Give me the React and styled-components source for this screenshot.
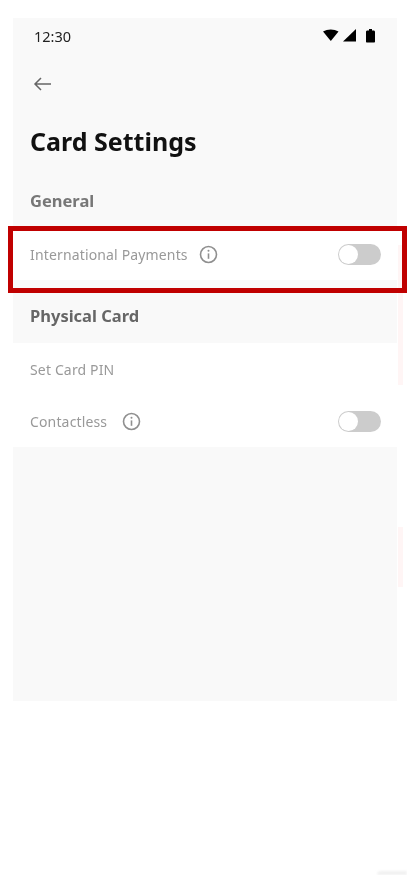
import styled, { createGlobalStyle, css } from "styled-components";

const GlobalStyle = createGlobalStyle`
  html, body {
    margin: 0;
    padding: 0;
    background: #fff;
  }
  body {
    font-family: "Noto Sans", "Open Sans", sans-serif;
  }
`;

const soft = css`
  filter: blur(0.6px);
`;

const InfoIcon = () => (
  <svg width="19" height="19" viewBox="0 0 19 19" fill="none">
    <circle cx="9.5" cy="9.5" r="8" stroke="#8f8f8f" strokeWidth="1.6" />
    <circle cx="9.5" cy="5.8" r="1" fill="#8f8f8f" />
    <path d="M9.5 8.4v5.4" stroke="#8f8f8f" strokeWidth="1.6" />
  </svg>
);

const StatusIcons = () => (
  <svg width="54" height="16" viewBox="0 0 54 16" fill="#000">
    <path d="M0 3.5C4.5 .8 11 .8 15.5 3.5L7.8 13z" />
    <path d="M20 13.5L33 1v12.5z" />
    <path d="M43 4c0-1 .6-1.500 1.500-1.500H46V1h3v1.500h1.500c.9 0 1.500.5 1.500 1.500v9.500c0 .6-.4 1-1 1h-7c-.6 0-1-.4-1-1z" />
  </svg>
);

const BackArrow = () => (
  <svg width="20" height="16" viewBox="0 0 20 16" fill="none" stroke="#666" strokeWidth="1.5">
    <path d="M19 8H3M9 2L3 8l6 6" />
  </svg>
);

const SettingRow = ({ label, info, toggle, gap, highlighted }) => (
  <Row>
    <RowLabel>
      <span>{label}</span>
      {info && <InfoSlot $gap={gap}><InfoIcon /></InfoSlot>}
    </RowLabel>
    {toggle && <Toggle />}
    {highlighted && <Highlight />}
  </Row>
);

export default function App() {
  return (
    <Page>
      <GlobalStyle />
      <Frame>
        <StatusBar>
          <Time>12:30</Time>
          <StatusIcons />
        </StatusBar>
        <BackButton><BackArrow /></BackButton>
        <Title>Card Settings</Title>
        <SectionTitle>General</SectionTitle>
        <SettingRow label="International Payments" info toggle gap={11} highlighted />
        <SectionTitle $second>Physical Card</SectionTitle>
        <SettingRow label="Set Card PIN" />
        <SettingRow label="Contactless" info toggle gap={15} />
      </Frame>
      <PinkStripe $top={245} $height={140} />
      <PinkStripe $top={527} $height={60} />
      <CornerSmudge />
    </Page>
  );
}

const Page = styled.div`
  position: relative;
  isolation: isolate;
  width: 407px;
  height: 875px;
  padding: 18px 10px 0 13px;
  box-sizing: border-box;
  overflow: hidden;
  background: #fff;
`;

const Frame = styled.div`
  position: relative;
  height: 683px;
  background: #f9f9f9;
`;

const StatusBar = styled.div`
  height: 36px;
  padding: 0 20px 0 21px;
  display: flex;
  align-items: center;
  justify-content: space-between;
  ${soft}
`;

const Time = styled.span`
  font-size: 14.5px;
  color: #222;
`;

const BackButton = styled.div`
  height: 16px;
  margin-top: 22px;
  padding-left: 19px;
  display: flex;
  ${soft}
`;

const Title = styled.h1`
  margin: 32px 0 0 17px;
  font-size: 25px;
  line-height: 34px;
  font-weight: 700;
  color: #111;
  ${soft}
`;

const SectionTitle = styled.h2`
  margin: ${(p) => (p.$second ? "26px 0 17px 17px" : "33px 0 17px 17px")};
  font-size: 16.5px;
  line-height: 20px;
  font-weight: 700;
  color: ${(p) => (p.$second ? "#666" : "#777")};
  ${soft}
`;

const Row = styled.div`
  position: relative;
  height: 52px;
  padding: 0 16px 0 17px;
  display: flex;
  align-items: center;
  justify-content: space-between;
  background: #fff;
`;

const RowLabel = styled.div`
  display: flex;
  align-items: center;
  font-size: 14px;
  letter-spacing: 0.15px;
  color: #999;
  ${soft}
`;

const InfoSlot = styled.span`
  display: flex;
  margin-left: ${(p) => p.$gap}px;
`;

const Toggle = styled.div`
  position: relative;
  width: 43px;
  height: 21px;
  border-radius: 11px;
  background: #ccc;
  ${soft}

  &::after {
    content: "";
    position: absolute;
    left: 1px;
    top: 1px;
    width: 19px;
    height: 19px;
    border-radius: 50%;
    background: #fff;
  }
`;

const Highlight = styled.div`
  position: absolute;
  left: -5px;
  right: -10px;
  top: -2px;
  height: 67px;
  box-sizing: border-box;
  border: 5px solid #c00000;
`;

const PinkStripe = styled.div`
  position: absolute;
  z-index: -1;
  right: 4px;
  top: ${(p) => p.$top}px;
  width: 5px;
  height: ${(p) => p.$height}px;
  background: #fff5f5;
`;

const CornerSmudge = styled.div`
  position: absolute;
  right: 0;
  bottom: 0;
  width: 30px;
  height: 4px;
  border-radius: 4px 0 0 0;
  background: #f1f1f1;
  filter: blur(1px);
`;
